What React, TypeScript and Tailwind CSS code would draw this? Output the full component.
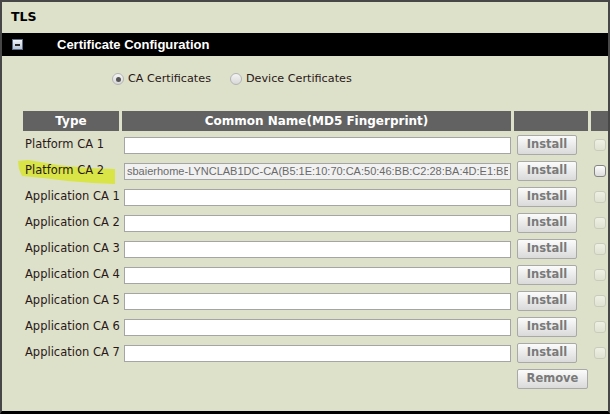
import React from 'react';

const rows = [
  { name: 'Platform CA 1', value: '' },
  { name: 'Platform CA 2', value: 'sbaierhome-LYNCLAB1DC-CA(B5:1E:10:70:CA:50:46:BB:C2:28:BA:4D:E1:BB:E9:7F)' },
  { name: 'Application CA 1', value: '' },
  { name: 'Application CA 2', value: '' },
  { name: 'Application CA 3', value: '' },
  { name: 'Application CA 4', value: '' },
  { name: 'Application CA 5', value: '' },
  { name: 'Application CA 6', value: '' },
  { name: 'Application CA 7', value: '' },
];

const verdana = { fontFamily: '"DejaVu Sans", Verdana, sans-serif' };

const Radio = ({ checked, label }: { checked?: boolean; label: string }) => (
  <label className="flex items-center gap-[4px] text-[11.2px] text-[#2a1818]">
    <span className="w-[12px] h-[12px] rounded-full border border-[#b4b4b4] bg-gradient-to-b from-[#f4f4f4] to-[#d8d8d8] flex items-center justify-center">
      {checked && <span className="w-[5px] h-[5px] rounded-full bg-[#555]" />}
    </span>
    {label}
  </label>
);

const Btn = ({ label, w }: { label: string; w: string }) => (
  <button
    className={`${w} h-[20px] rounded-[2px] border border-[#a9a9a9] bg-gradient-to-b from-[#fbfbfb] to-[#dadada] text-[11.5px] font-bold text-[#7a7a7a] leading-none`}
  >
    {label}
  </button>
);

const App: React.FC = () => {
  return (
    <div
      className="w-[610px] h-[414px] overflow-hidden bg-[#dde1ca] border-t-2 border-l-2 border-r-2 border-b-[3px] border-[#474747] border-b-black relative"
      style={verdana}
    >
      {/* TLS title */}
      <div className="h-[31px] flex items-center pl-[9px] text-[12.5px] font-bold text-black">TLS</div>

      {/* section bar */}
      <div className="h-[23px] bg-black flex items-center pl-[10px]">
        <span className="w-[11px] h-[11px] border border-[#5d6f86] bg-gradient-to-b from-[#f2f4f8] to-[#b9c5d6] flex items-center justify-center">
          <span className="w-[5px] h-[2px] bg-[#2a2a2a]" />
        </span>
        <span
          className="ml-[34px] text-white font-bold text-[13px]"
          style={{ fontFamily: '"Liberation Sans", Arial, sans-serif' }}
        >
          Certificate Configuration
        </span>
      </div>

      {/* radio options */}
      <div className="h-[44px] flex items-center pt-[3px] pl-[110px] gap-[19px]">
        <Radio checked label="CA Certificates" />
        <Radio label="Device Certificates" />
      </div>

      {/* highlighter mark */}
      <svg className="absolute left-[16px] top-[158px]" width="100" height="30" viewBox="0 0 100 30">
        <path
          d="M0 1 L10 0 L40 5 L70 8 L97 9 L97 24 L75 23 L50 21 L25 18 L4 16 L1 9 Z"
          fill="#d9e446"
        />
      </svg>

      {/* table */}
      <div className="relative pt-[11px] pl-[21px]">
        <div className="grid grid-cols-[96px_389px_74px_40px] gap-x-[3px]">
          <div className="h-[20px] mb-[1px] bg-[#626262] text-white font-bold text-[12px] flex items-center justify-center">Type</div>
          <div className="h-[20px] mb-[1px] bg-[#626262] text-white font-bold text-[12px] flex items-center justify-center">
            Common Name(MD5 Fingerprint)
          </div>
          <div className="h-[20px] mb-[1px] bg-[#626262]" />
          <div className="h-[20px] mb-[1px] bg-[#626262]" />

          {rows.map((r) => {
            const active = r.value !== '';
            return (
              <React.Fragment key={r.name}>
                <div className="h-[26px] flex items-center pl-[2px] text-[11.5px] text-[#2a1818] whitespace-nowrap">
                  {r.name}
                </div>
                <div className="h-[26px] flex items-center pl-[2px]">
                  <input
                    readOnly
                    value={r.value}
                    className={`w-[387px] h-[17px] border border-[#a5a5a5] px-[2px] text-[11px] text-[#6a6a6a] outline-none ${
                      active ? 'bg-[#f1f1f1]' : 'bg-white'
                    }`}
                    style={{ fontFamily: '"Liberation Sans", Arial, sans-serif' }}
                  />
                </div>
                <div className="h-[26px] flex items-center pl-[3px]">
                  <Btn label="Install" w="w-[60px]" />
                </div>
                <div className="h-[26px] flex items-center pl-[3px]">
                  <span
                    className={`w-[12px] h-[12px] rounded-[3px] border ${
                      active
                        ? 'border-[#858585] bg-gradient-to-b from-[#fdfdfd] to-[#dcdcdc]'
                        : 'border-[#c9cbbd] bg-gradient-to-b from-[#eef0e4] to-[#dfe2d1]'
                    }`}
                  />
                </div>
              </React.Fragment>
            );
          })}

          <div className="h-[26px]" />
          <div className="h-[26px]" />
          <div className="h-[26px] flex items-center pl-[3px]">
            <Btn label="Remove" w="w-[71px]" />
          </div>
          <div className="h-[26px]" />
        </div>
      </div>
    </div>
  );
};

export default App;
